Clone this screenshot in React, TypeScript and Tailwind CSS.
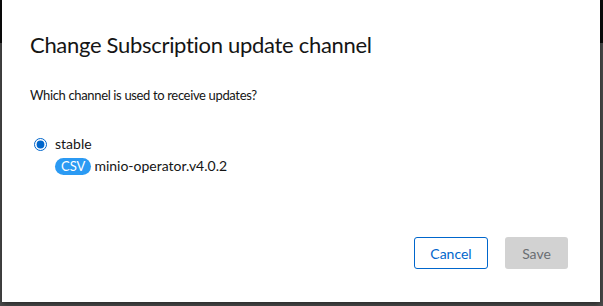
import * as React from "react"

// Modal for picking the update channel of an operator subscription.

export default function App() {
  const [channel, setChannel] = React.useState("stable")

  return (
    <div className="relative h-[306px] w-[603px] overflow-hidden bg-[#4d4d4d] font-['Lato',sans-serif]">
      <div className="absolute inset-x-0 top-0 h-[43px] bg-[#0b0b0b]" />
      <div className="absolute left-[2px] top-0 flex h-[302px] w-[598px] flex-col bg-white shadow-[0_2px_6px_rgba(0,0,0,0.5)]">
        <div className="px-[28px] pt-[30px]">
          <h1 className="text-[22px] leading-[30px] tracking-[-0.3px] text-[#151515]">
            Change Subscription update channel
          </h1>
        </div>
        <div className="px-[28px] pt-[25px]">
          <p className="text-[13px] leading-[20px] tracking-[-0.35px] text-[#151515]">
            Which channel is used to receive updates?
          </p>
          <label className="ml-[4px] mt-[29px] flex items-start gap-[8px]">
            <input
              type="radio"
              name="channel"
              checked={channel === "stable"}
              onChange={() => setChannel("stable")}
              className="mt-[4px] h-[13px] w-[13px] accent-[#06c]"
            />
            <span className="flex flex-col">
              <span className="text-[14px] leading-[20px] text-[#151515]">stable</span>
              <span className="mt-[2px] flex items-center gap-[3px]">
                <span className="rounded-full bg-[#2b9af3] px-[6px] text-[13px] leading-[17px] text-white">
                  CSV
                </span>
                <span className="text-[14px] leading-[20px] text-[#151515]">minio-operator.v4.0.2</span>
              </span>
            </span>
          </label>
        </div>
        <div className="mt-auto flex justify-end gap-[17px] px-[32px] pb-[33px]">
          <button className="h-[32px] w-[74px] rounded-[3px] border border-[#06c] text-[14px] text-[#06c]">
            Cancel
          </button>
          <button disabled className="h-[32px] w-[63px] rounded-[3px] bg-[#d2d2d2] text-[14px] text-[#6a6e73]">
            Save
          </button>
        </div>
      </div>
    </div>
  )
}
